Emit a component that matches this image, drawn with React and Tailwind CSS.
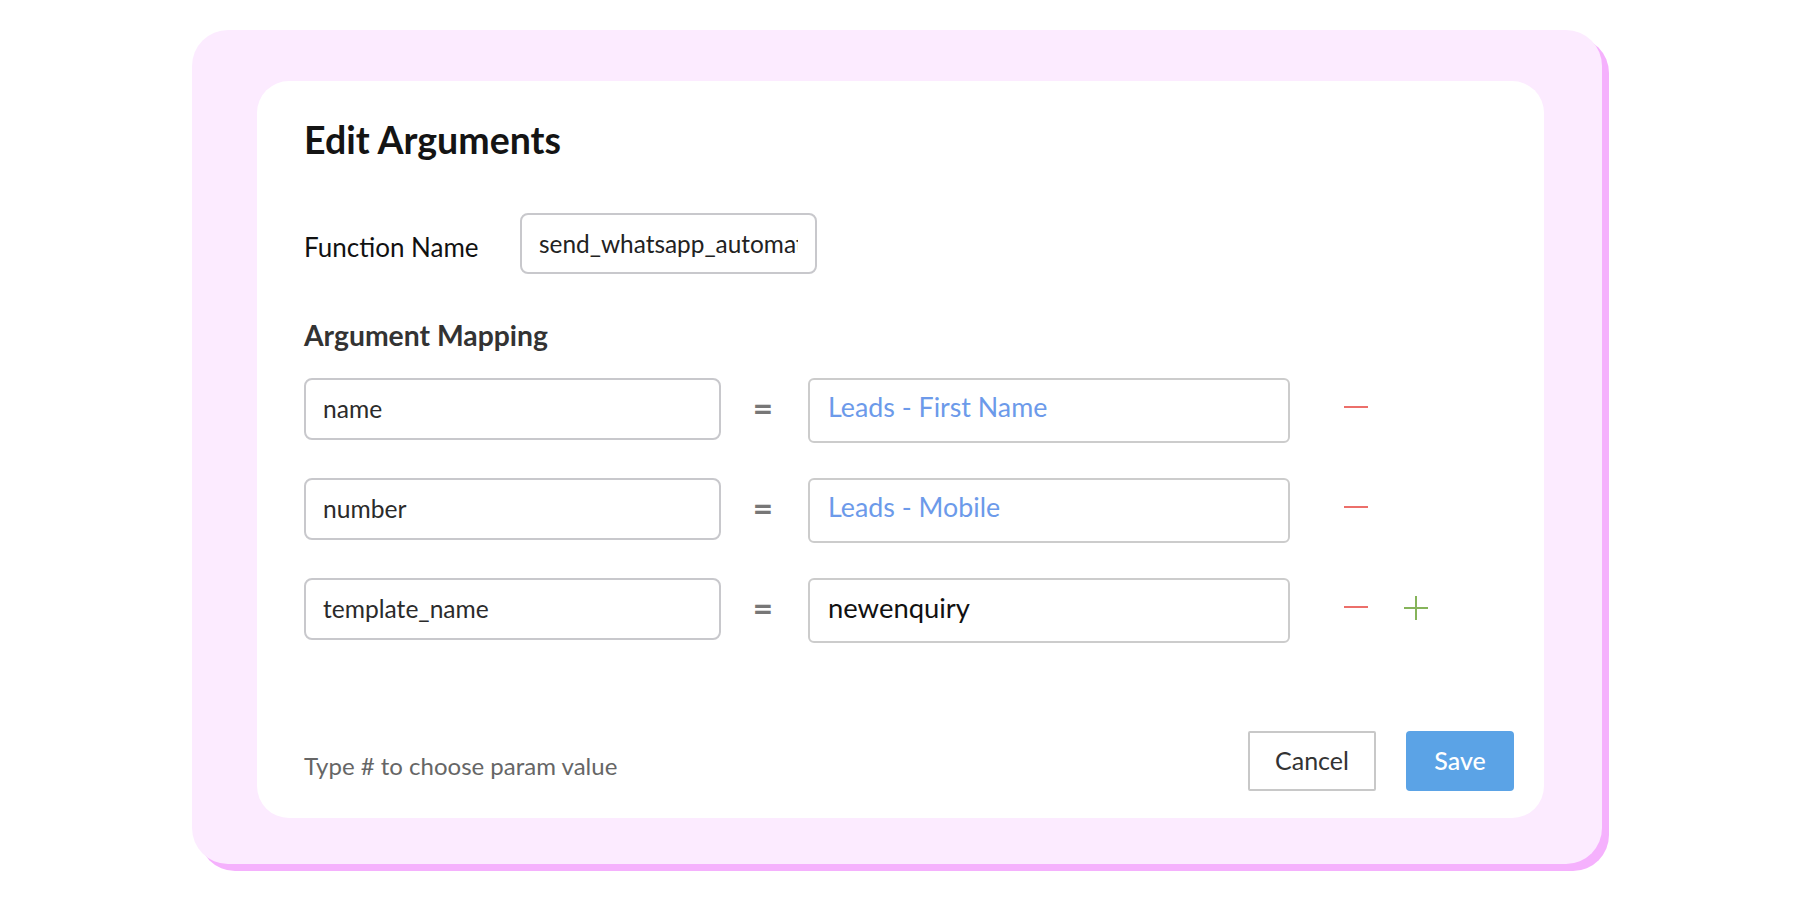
import React from "react";

const ROWS = [
  { name: "name", value: "Leads - First Name", mapped: true },
  { name: "number", value: "Leads - Mobile", mapped: true },
  { name: "template_name", value: "newenquiry", mapped: false, last: true },
];

function MinusIcon() {
  return (
    <svg width="24" height="24" viewBox="0 0 24 24" fill="none" className="block">
      <path d="M0 12H24" stroke="#ec6f6a" strokeWidth="2" />
    </svg>
  );
}

function PlusIcon() {
  return (
    <svg width="24" height="24" viewBox="0 0 24 24" fill="none" className="block mt-[2px]">
      <path d="M0 12H24M12 0V24" stroke="#86b45a" strokeWidth="2" />
    </svg>
  );
}

function ArgumentRow({ row }) {
  return (
    <div className="flex items-start">
      <input
        readOnly
        value={row.name}
        className="w-[417px] h-[62px] px-[17px] pb-[2px] rounded-[8px] border-2 border-[#c8c8cc] bg-white text-[24.6px] text-[#2b2b2b] outline-none"
      />
      <div className="w-[84px] h-[58px] flex items-center justify-center text-[35px] font-bold text-[#777777]">=</div>
      <input
        readOnly
        value={row.value}
        className={`w-[482px] h-[65px] ml-[3px] px-[18px] pb-[7px] rounded-[6px] border-2 border-[#cccccc] bg-white outline-none ${
          row.mapped ? "text-[26.8px] text-[#6c9aea]" : "text-[27.4px] text-[#111111]"
        }`}
      />
      <div className="h-[57px] ml-[54px] flex items-center gap-[36px]">
        <MinusIcon />
        {row.last && <PlusIcon />}
      </div>
    </div>
  );
}

export default function App() {
  return (
    <div className="w-full h-[900px] bg-white pl-[192px] pt-[30px] font-['Lato',sans-serif]">
      <div className="w-[1410px] h-[834px] pl-[65px] pt-[51px] rounded-[36px] bg-[#fcebff] shadow-[7px_7px_0_#f5b1fd]">
        <div className="w-[1287px] h-[737px] pl-[47px] pr-[30px] pt-[37px] rounded-[32px] bg-white flex flex-col">
          <h1 className="text-[37.5px] leading-[44px] font-bold text-[#141414]">Edit Arguments</h1>
          <div className="flex items-start mt-[51px]">
            <label className="w-[216px] h-[61px] pt-[15px] text-[26px] text-[#111111]">Function Name</label>
            <input
              readOnly
              value="send_whatsapp_automation"
              className="w-[297px] h-[61px] px-[17px] rounded-[8px] border-2 border-[#c8c8cc] bg-white text-[24.4px] text-[#222222] outline-none"
            />
          </div>
          <h2 className="mt-[43px] text-[28.3px] leading-[36px] font-bold text-[#333333]">Argument Mapping</h2>
          <div className="mt-[25px] flex flex-col gap-[35px]">
            {ROWS.map((row) => (
              <ArgumentRow key={row.name} row={row} />
            ))}
          </div>
          <div className="mt-auto mb-[27px] flex items-center justify-between">
            <span className="text-[24px] text-[#666666] mt-[10px]">Type # to choose param value</span>
            <div className="flex gap-[30px]">
              <button className="w-[128px] h-[60px] border-2 border-[#c8c8c8] rounded-[2px] bg-white text-[25px] text-[#333333]">
                Cancel
              </button>
              <button className="w-[108px] h-[60px] rounded-[4px] bg-[#5ba3e6] text-[25px] font-medium text-white">
                Save
              </button>
            </div>
          </div>
        </div>
      </div>
    </div>
  );
}
